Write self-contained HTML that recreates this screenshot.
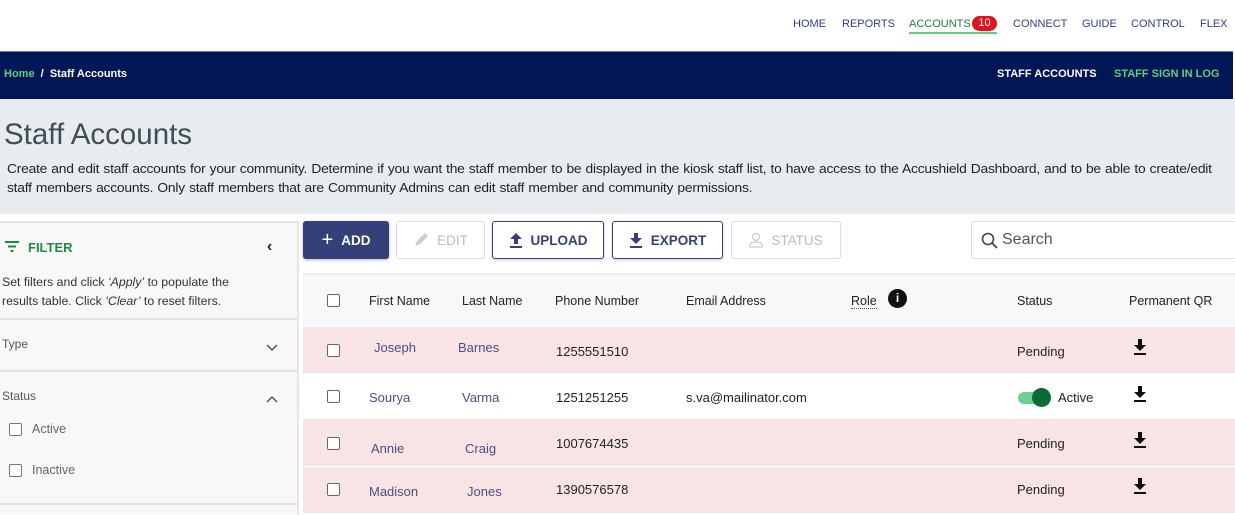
<!DOCTYPE html>
<html><head><meta charset="utf-8"><style>
*{box-sizing:border-box;margin:0;padding:0}
body{width:1235px;height:515px;overflow:hidden;background:#fff;font-family:"Liberation Sans",Arial,sans-serif;position:relative;color:#222}
.a{position:absolute;white-space:nowrap}
.nav{font-size:11px;color:#2e3f8a;top:18px}
.navy{position:absolute;left:0;top:51px;width:1233px;height:48px;background:#001655;border-top:1px solid #6a7aa0}
.hdr{position:absolute;left:0;top:99px;width:1235px;height:115px;background:#e9ecef}
.btn{position:absolute;top:221px;height:38px;border-radius:3px;font-size:13.5px;font-weight:bold;display:flex;align-items:center;justify-content:center;gap:8px}
.cb{position:absolute;width:13px;height:13px;border:1.5px solid #666;border-radius:2px;background:#fff}
.row{position:absolute;left:303px;width:932px;height:46px;border-bottom:1px solid #e6e6e6}
.t{position:absolute;font-size:13px;white-space:nowrap}
.nm{color:#4a4f80}
.dl{position:absolute;width:14px;height:16px}
.ln{position:absolute;left:7px;font-size:12.5px;color:#222;letter-spacing:-0.2px;word-spacing:0.5px;transform:scaleX(1.105);transform-origin:left;white-space:nowrap}
</style></head><body>
<div class="a nav" style="left:793px">HOME</div>
<div class="a nav" style="left:842px">REPORTS</div>
<div class="a nav" style="left:909px;color:#1d7a3c">ACCOUNTS</div>
<div class="a" style="left:972px;top:16px;width:25px;height:15px;border-radius:8px;background:#e0141e;color:#fff;font-size:11px;text-align:center;line-height:15px">10</div>
<div class="a" style="left:909px;top:32px;width:88px;height:2px;background:#5fcf84"></div>
<div class="a nav" style="left:1013px">CONNECT</div>
<div class="a nav" style="left:1082px">GUIDE</div>
<div class="a nav" style="left:1131px">CONTROL</div>
<div class="a nav" style="left:1200px">FLEX</div>
<div class="navy"></div>
<div class="a" style="left:4px;top:68px;font-size:11px;font-weight:bold;color:#fff"><span style="color:#5fcf84">Home</span> &nbsp;/ &nbsp;Staff Accounts</div>
<div class="a" style="left:997px;top:68px;font-size:11px;font-weight:bold;color:#fff">STAFF ACCOUNTS</div>
<div class="a" style="left:1114px;top:68px;font-size:11px;font-weight:bold;color:#5fcf84">STAFF SIGN IN LOG</div>
<div class="hdr"></div>
<div class="a" style="left:4px;top:118px;font-size:29.5px;color:#3f4e55">Staff Accounts</div>
<div class="ln" style="top:162px">Create and edit staff accounts for your community. Determine if you want the staff member to be displayed in the kiosk staff list, to have access to the Accushield Dashboard, and to be able to create/edit</div>
<div class="ln" style="top:181px">staff members accounts. Only staff members that are Community Admins can edit staff member and community permissions.</div>
<div class="a" style="left:0;top:221px;width:299px;height:294px;background:#f8f8f8;border-right:2px solid #e4e6ea;border-top:2px solid #e4e6ea"></div>
<svg class="a" style="left:4px;top:240px" width="16" height="13"><path d="M1 2h14M4 6.5h8M6.5 11h3" stroke="#1d8a45" stroke-width="2"/></svg>
<div class="a" style="left:28px;top:240px;font-size:13px;font-weight:bold;color:#1d8a45">FILTER</div>
<div class="a" style="left:267px;top:238px;font-size:16px;font-weight:bold">‹</div>
<div class="a" style="left:2px;top:273px;font-size:12.3px;line-height:19px;color:#333">Set filters and click <i>‘Apply’</i> to populate the<br>results table. Click <i>‘Clear’</i> to reset filters.</div>
<div class="a" style="left:0;top:318px;width:298px;height:2px;background:#e0e3e8"></div>
<div class="a" style="left:2px;top:337px;font-size:12px;color:#555">Type</div>
<svg class="a" style="left:266px;top:344px" width="12" height="8"><path d="M1 1l5 5 5-5" fill="none" stroke="#555" stroke-width="1.5"/></svg>
<div class="a" style="left:0;top:370px;width:298px;height:2px;background:#e0e3e8"></div>
<div class="a" style="left:2px;top:389px;font-size:12px;color:#555">Status</div>
<svg class="a" style="left:266px;top:395px" width="12" height="8"><path d="M1 7l5-5 5 5" fill="none" stroke="#555" stroke-width="1.5"/></svg>
<div class="cb" style="left:9px;top:423px;border-color:#777"></div>
<div class="a" style="left:32px;top:422px;font-size:12.5px;color:#666">Active</div>
<div class="cb" style="left:9px;top:464px;border-color:#777"></div>
<div class="a" style="left:32px;top:463px;font-size:12.5px;color:#666">Inactive</div>
<div class="a" style="left:0;top:503px;width:298px;height:2px;background:#e0e3e8"></div>
<div class="btn" style="left:303px;width:86px;background:#35407a;color:#fff;box-shadow:0 1px 3px rgba(0,0,0,.3)"><span style="font-size:20px;font-weight:normal">+</span>ADD</div>
<div class="btn" style="left:396px;width:89px;border:1px solid #ddd;color:#bbb;font-weight:normal"><svg width="16" height="16"><path d="M2 14l2-5 8-8 3 3-8 8z" fill="#ccc"/></svg>EDIT</div>
<div class="btn" style="left:492px;width:112px;border:1.5px solid #35407a;color:#35407a;box-shadow:0 1px 3px rgba(0,0,0,.2)"><svg width="14" height="16"><path d="M7 1l6 6H9v5H5V7H1z M1 14h12v2H1z" fill="#35407a"/></svg>UPLOAD</div>
<div class="btn" style="left:612px;width:111px;border:1.5px solid #35407a;color:#35407a;box-shadow:0 1px 3px rgba(0,0,0,.2)"><svg width="14" height="16"><path d="M5 1h4v5h4l-6 6-6-6h4z M1 14h12v2H1z" fill="#35407a"/></svg>EXPORT</div>
<div class="btn" style="left:731px;width:110px;border:1px solid #ddd;color:#bbb;font-weight:normal"><svg width="14" height="16"><circle cx="7" cy="5" r="3.5" fill="none" stroke="#ccc" stroke-width="1.3"/><path d="M1 15v-2c0-2 3-3 6-3s6 1 6 3v2z" fill="none" stroke="#ccc" stroke-width="1.3"/></svg>STATUS</div>
<div class="a" style="left:971px;top:221px;width:266px;height:38px;border:1px solid #ddd;border-radius:3px"></div>
<svg class="a" style="left:981px;top:232px" width="18" height="18"><circle cx="7" cy="7" r="5.5" fill="none" stroke="#444" stroke-width="1.6"/><path d="M11 11l5 5" stroke="#444" stroke-width="1.8"/></svg>
<div class="a" style="left:1002px;top:231px;font-size:16px;color:#555">Search</div>
<div class="a" style="left:303px;top:273px;width:932px;height:54px;background:#f7f8fa;border-top:2px solid #eaecef"></div>
<div class="cb" style="left:327px;top:294px"></div>
<div class="t" style="left:369px;top:294px;font-size:12.5px">First Name</div>
<div class="t" style="left:462px;top:294px;font-size:12.5px">Last Name</div>
<div class="t" style="left:555px;top:294px;font-size:12.5px">Phone Number</div>
<div class="t" style="left:686px;top:294px;font-size:12.5px">Email Address</div>
<div class="t" style="left:851px;top:294px;font-size:12.5px;border-bottom:1px dotted #555">Role</div>
<div class="a" style="left:888px;top:289px;width:19px;height:19px;border-radius:50%;background:#111;color:#fff;font-size:12px;font-weight:bold;text-align:center;line-height:19px">i</div>
<div class="t" style="left:1017px;top:294px;font-size:12.5px">Status</div>
<div class="t" style="left:1129px;top:294px;font-size:12.5px">Permanent QR</div>
<div class="row" style="top:327px;background:#f8e4e5"></div>
<div class="row" style="top:374px;background:#fff"></div>
<div class="row" style="top:420px;background:#f8e4e5"></div>
<div class="row" style="top:467px;background:#f8e4e5"></div>
<div class="cb" style="left:327px;top:344px"></div>
<div class="t nm" style="left:374px;top:340px">Joseph</div>
<div class="t nm" style="left:458px;top:340px">Barnes</div>
<div class="t" style="left:556px;top:344px">1255551510</div>
<div class="t" style="left:1017px;top:344px">Pending</div>
<div class="cb" style="left:327px;top:390px"></div>
<div class="t nm" style="left:369px;top:390px">Sourya</div>
<div class="t nm" style="left:462px;top:390px">Varma</div>
<div class="t" style="left:556px;top:390px">1251251255</div>
<div class="t" style="left:686px;top:390px">s.va@mailinator.com</div>
<div class="a" style="left:1018px;top:392px;width:32px;height:12px;border-radius:6px;background:#6ccf97"></div>
<div class="a" style="left:1032px;top:388px;width:19px;height:19px;border-radius:50%;background:#0c6a34"></div>
<div class="t" style="left:1058px;top:390px">Active</div>
<div class="cb" style="left:327px;top:437px"></div>
<div class="t nm" style="left:371px;top:441px">Annie</div>
<div class="t nm" style="left:465px;top:441px">Craig</div>
<div class="t" style="left:556px;top:436px">1007674435</div>
<div class="t" style="left:1017px;top:436px">Pending</div>
<div class="cb" style="left:327px;top:483px"></div>
<div class="t nm" style="left:369px;top:484px">Madison</div>
<div class="t nm" style="left:467px;top:484px">Jones</div>
<div class="t" style="left:556px;top:482px">1390576578</div>
<div class="t" style="left:1017px;top:482px">Pending</div>
<svg class="dl" style="left:1133px;top:339px"><path d="M5 0h4v6h4l-6 6-6-6h4z M1 14h12v2H1z" fill="#111"/></svg>
<svg class="dl" style="left:1133px;top:386px"><path d="M5 0h4v6h4l-6 6-6-6h4z M1 14h12v2H1z" fill="#111"/></svg>
<svg class="dl" style="left:1133px;top:432px"><path d="M5 0h4v6h4l-6 6-6-6h4z M1 14h12v2H1z" fill="#111"/></svg>
<svg class="dl" style="left:1133px;top:478px"><path d="M5 0h4v6h4l-6 6-6-6h4z M1 14h12v2H1z" fill="#111"/></svg>
</body></html>
